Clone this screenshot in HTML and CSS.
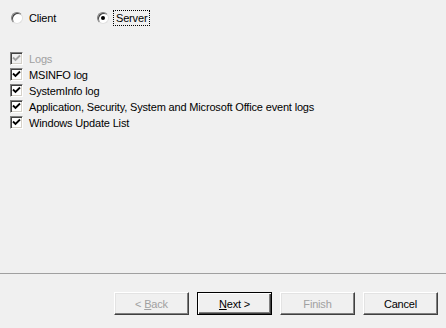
FILE: index.html
```html
<!DOCTYPE html>
<html lang="en">
<head>
  <meta charset="UTF-8">
  <title>Collect Logs</title>
  <link rel="stylesheet" href="styles.css">
</head>
<body>
  <div class="wizard">
    <div class="content">
      <div class="mode-row">
        <label class="opt"><span class="radio"></span>Client</label>
        <label class="opt"><span class="radio on"></span><span class="focus">Server</span></label>
      </div>
      <div class="checks">
        <label class="chk disabled"><span class="box"><svg width="9" height="9" viewBox="0 0 9 9"><path d="M1 3.5 L3.5 6 L8 1.5" /></svg></span>Logs</label>
        <label class="chk"><span class="box"><svg width="9" height="9" viewBox="0 0 9 9"><path d="M1 3.5 L3.5 6 L8 1.5" /></svg></span>MSINFO log</label>
        <label class="chk"><span class="box"><svg width="9" height="9" viewBox="0 0 9 9"><path d="M1 3.5 L3.5 6 L8 1.5" /></svg></span>SystemInfo log</label>
        <label class="chk"><span class="box"><svg width="9" height="9" viewBox="0 0 9 9"><path d="M1 3.5 L3.5 6 L8 1.5" /></svg></span>Application, Security, System and Microsoft Office event logs</label>
        <label class="chk"><span class="box"><svg width="9" height="9" viewBox="0 0 9 9"><path d="M1 3.5 L3.5 6 L8 1.5" /></svg></span>Windows Update List</label>
      </div>
    </div>
    <div class="footer">
      <button class="btn" disabled>&lt; <u>B</u>ack</button>
      <button class="btn default"><u>N</u>ext &gt;</button>
      <button class="btn" disabled>Finish</button>
      <button class="btn">Cancel</button>
    </div>
  </div>
</body>
</html>
```

FILE: styles.css
```css
body { margin: 0; padding: 0; background: #f0f0f0; font-family: "Liberation Sans", Arial, sans-serif; font-size: 11px; letter-spacing: -0.17px; color: #000; }
.wizard { width: 446px; height: 328px; display: flex; flex-direction: column; }
.content { flex: 1; padding: 9px 0 0 11px; }
.mode-row { display: flex; align-items: center; height: 17px; }
.opt { display: flex; align-items: center; gap: 6px; width: 86px; }
.radio { width: 10px; height: 10px; border-radius: 50%; background: #fff; border: 1px solid; border-color: #808080 #e0e0e0 #e0e0e0 #808080; box-shadow: inset 1px 1px #404040; display: flex; align-items: center; justify-content: center; }
.radio.on::after { content: ""; width: 4px; height: 4px; border-radius: 50%; background: #000; }
.focus { outline: 1px dotted #000; outline-offset: 1px; padding: 0 1px; }
.checks { display: flex; flex-direction: column; gap: 3px; margin-top: 26px; }
.chk { display: flex; align-items: center; gap: 6px; height: 13px; margin-left: -1px; }
.box { width: 9px; height: 9px; background: #fff; border: 1px solid; border-color: #808080 #fff #fff #808080; box-shadow: inset 1px 1px #404040, inset -1px -1px #d4d0c8; padding: 1px; display: flex; }
.box svg path { fill: none; stroke: #000; stroke-width: 1.8; }
.chk.disabled { color: #a0a0a0; }
.chk.disabled .box { background: #f0f0f0; }
.chk.disabled .box svg path { stroke: #a0a0a0; }
.footer { height: 55px; border-top: 1px solid #a0a0a0; display: flex; justify-content: flex-end; align-items: flex-start; gap: 8px; padding: 18px 8px 0 0; box-sizing: border-box; }
.btn { width: 75px; height: 23px; background: #f0f0f0; font-family: "Liberation Sans", Arial, sans-serif; font-size: 11px; letter-spacing: -0.17px; color: #000; border: 1px solid; border-color: #fff #404040 #404040 #fff; box-shadow: inset -1px -1px #808080, inset 1px 1px #e3e3e3; padding: 0; }
.btn:disabled { color: #a0a0a0; }
.btn.default { border-color: #000; box-shadow: inset 1px 1px #fff, inset -1px -1px #404040, inset -2px -2px #808080; }
```
